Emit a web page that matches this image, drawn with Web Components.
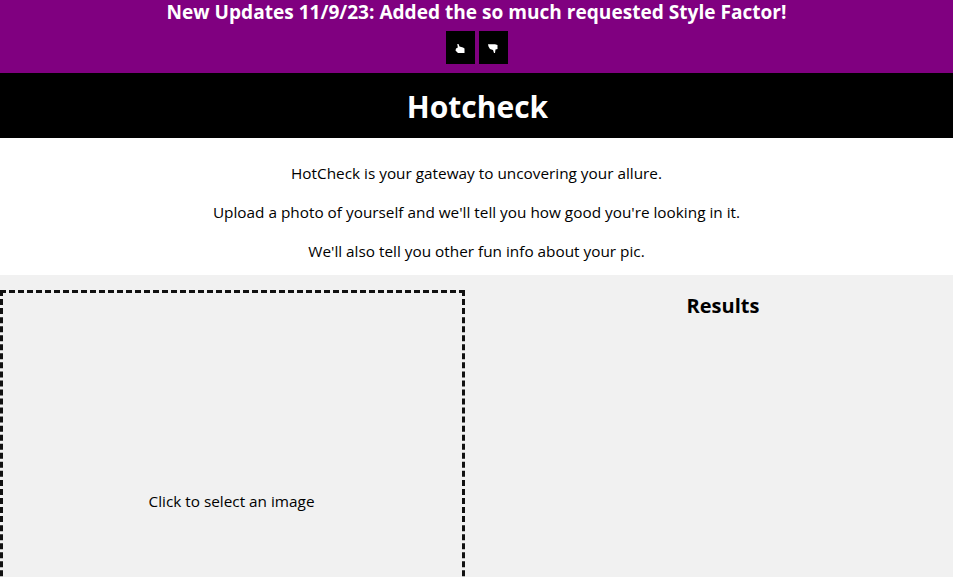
<!DOCTYPE html>
<html lang="en">
<head>
<meta charset="utf-8">
<title>Hotcheck</title>
<style>
  html, body { margin: 0; padding: 0; background: #fff; }
  body { font-family: "Open Sans", "Noto Sans", sans-serif; color: #000; }
</style>
</head>
<body>
<update-banner>New Updates 11/9/23: Added the so much requested Style Factor!</update-banner>
<site-header>Hotcheck</site-header>
<intro-text>
  <p>HotCheck is your gateway to uncovering your allure.</p>
  <p>Upload a photo of yourself and we'll tell you how good you're looking in it.</p>
  <p>We'll also tell you other fun info about your pic.</p>
</intro-text>
<main-panel>
  <drop-zone slot="left">Click to select an image</drop-zone>
  <results-pane slot="right">Results</results-pane>
</main-panel>
<script>
const define = (name, html) => {
    customElements.define(name, class extends HTMLElement {
        constructor() {
            super();
            this.attachShadow({mode: 'open'}).innerHTML = html;
        }
    });
};

define('update-banner', `
    <style>
        :host { display: block; background: #800080; color: #fff; text-align: center; height: 73px; box-sizing: border-box; }
        .title { font-size: 19.08px; font-weight: 700; line-height: 25px; }
        .votes { display: flex; justify-content: center; gap: 4px; margin-top: 6px; }
        button { width: 29px; height: 33px; padding: 2px 0 0; border: 0; background: #000; display: flex; align-items: center; justify-content: center; }
        svg { width: 10px; height: 9px; display: block; }
    </style>
    <div class="title"><slot></slot></div>
    <div class="votes">
        <button aria-label="Thumbs up"><svg viewBox="0 0 10 9"><path fill="#fff" d="M2.300 0H3.500L4.500 2.500 8 3.500 9.500 4.500V9H3L.5 6.500 1 4.500 2.800 3.500z"/></svg></button>
        <button aria-label="Thumbs down"><svg viewBox="0 0 10 9"><path fill="#fff" d="M0 .3H7L9.500 1V5L7.500 5.500 7 9H6L5 6 2 5 .5 2.500z"/></svg></button>
    </div>
`);

define('site-header', `
    <style>
        :host { display: flex; align-items: center; justify-content: center; height: 65px; background: #000; color: #fff; }
        h1 { margin: 2px 0 0 2px; font-size: 30px; font-weight: 700; }
    </style>
    <h1><slot></slot></h1>
`);

define('intro-text', `
    <style>
        :host { display: block; height: 137px; box-sizing: border-box; padding-top: 25px; text-align: center; font-size: 15.33px; }
        ::slotted(p) { margin: 0 0 18px; line-height: 21px; }
    </style>
    <slot></slot>
`);

define('main-panel', `
    <style>
        :host { display: grid; grid-template-columns: 465px 1fr; gap: 28px; background: #f1f1f1; padding-top: 15px; }
    </style>
    <slot name="left"></slot>
    <slot name="right"></slot>
`);

define('drop-zone', `
    <style>
        :host { display: flex; align-items: center; justify-content: center; height: 422px; box-sizing: border-box; border: 3px dashed #111; padding-right: 2px; font-size: 15.33px; }
    </style>
    <slot></slot>
`);

define('results-pane', `
    <style>
        :host { display: block; text-align: center; }
        h2 { margin: 0; font-size: 20px; font-weight: 700; line-height: 32px; }
    </style>
    <h2><slot></slot></h2>
`);
</script>
</body>
</html>
